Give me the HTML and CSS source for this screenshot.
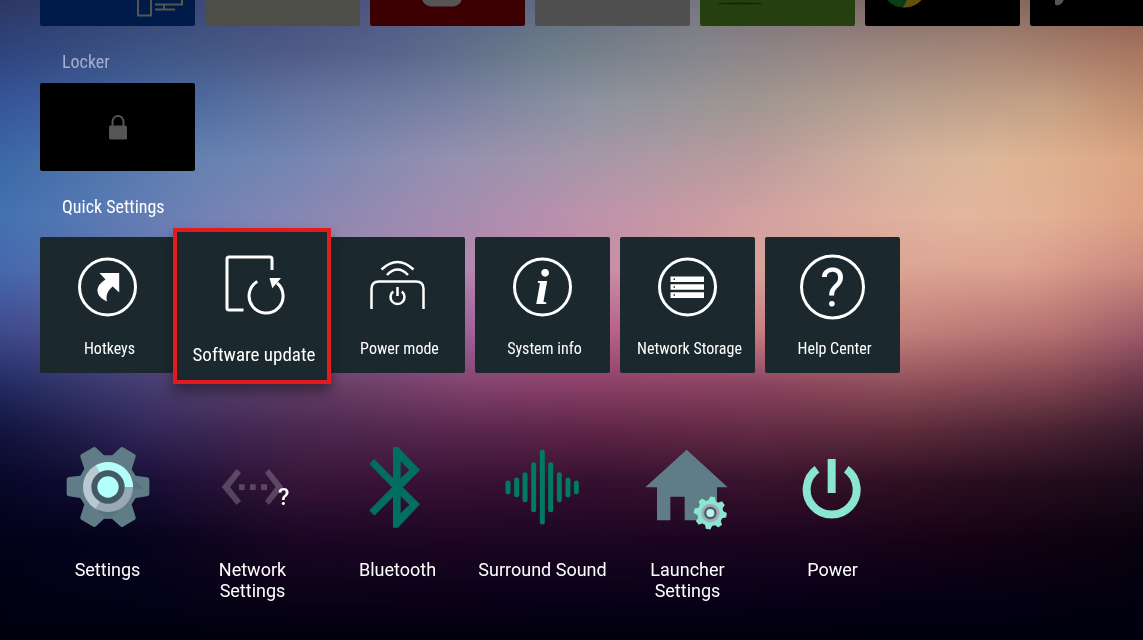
FILE: index.html
```
<!DOCTYPE html>
<html lang="en">
<head>
  <meta charset="UTF-8" />
  <meta name="viewport" content="width=device-width, initial-scale=1.0" />
  <title>Launcher</title>
  <link rel="stylesheet" href="styles.css">
</head>
<body>
  <div class="wallpaper">
    <div class="band band-1"></div>
    <div class="band band-2"></div>
    <div class="band band-3"></div>
    <div class="band band-4"></div>
    <div class="band band-5"></div>
    <div class="band band-6"></div>
    <div class="band band-7"></div>
    <div class="band band-8"></div>
    <div class="band band-9"></div>
    <div class="band band-10"></div>
    <div class="band band-11"></div>
    <div class="band band-12"></div>
    <div class="band band-13"></div>
  </div>

  <main class="launcher">
    <!-- Apps row, scrolled almost out of view -->
    <div class="apps">
      <button class="app app-blue" aria-label="Remote desktop">
        <svg viewBox="0 0 155 25" fill="none" stroke="#55564f" stroke-width="2">
          <path d="M98 -4V15H111V-4M115 4H142V-2M124 4V9M115 9H135" />
        </svg>
      </button>
      <button class="app app-olive" aria-label="App"></button>
      <button class="app app-red" aria-label="Video">
        <svg viewBox="0 0 155 25"><rect x="52" y="-20" width="40" height="26" rx="9" fill="#555" /></svg>
      </button>
      <button class="app app-grey" aria-label="App"></button>
      <button class="app app-green" aria-label="App">
        <svg viewBox="0 0 155 25"><ellipse cx="40" cy="3" rx="23" ry="1" fill="#142803" /></svg>
      </button>
      <button class="app app-black" aria-label="Browser">
        <svg viewBox="0 0 155 25">
          <path d="M39 7A22 22 0 0 1 20 -4H45Z" fill="#0d3d17" />
          <path d="M38 7A22 22 0 0 0 59 -4H44Z" fill="#66500a" />
        </svg>
      </button>
      <button class="app app-black" aria-label="App">
        <svg viewBox="0 0 155 25"><path d="M25 -2H34Q33 4 27 5L25 4Z" fill="#555" /></svg>
      </button>
    </div>

    <h2 class="row-title row-title-dim">Locker</h2>
    <button class="locker" aria-label="Locker">
      <svg viewBox="0 0 20 26">
        <path d="M4.500 12V7.500A5.500 5.500 0 0 1 15.500 7.500V12" fill="none" stroke="#555" stroke-width="2" />
        <rect x="1" y="11.500" width="18" height="14" rx="1.500" fill="#555" />
      </svg>
    </button>

    <h2 class="row-title">Quick Settings</h2>
    <div class="tiles">
      <button class="tile">
        <svg viewBox="0 0 68 68">
          <circle class="line" cx="33.500" cy="34" r="28" />
          <path d="M25.500 20H45.200V39.500L38.700 33.500C34 37.500 31.500 42 33 48.500C25 45 22.500 40 23.800 35C25 31 28 29 31.500 26.500Z" />
        </svg>
        <span>Hotkeys</span>
      </button>
      <button class="tile tile-selected">
        <svg viewBox="0 0 68 68">
          <path class="line" d="M25.500 59H11Q9 59 9 57V8Q9 6 11 6H52Q54 6 54 8V19" />
          <path class="line" d="M39.300 30.500A17 17 0 1 0 59 32" />
          <path d="M51.500 27H63L54.300 37.300Z" />
        </svg>
        <span>Software update</span>
      </button>
      <button class="tile">
        <svg viewBox="0 0 68 68">
          <path class="line line-thin" d="M7.500 56V36Q7.500 28.500 15 28.500H52Q59.500 28.500 59.500 36V56" />
          <path class="line line-thin" d="M17.500 16.500Q33.500 1.500 49.500 16.500M23 22Q33.500 11 44 22" />
          <path class="line line-thin" d="M29.200 38.500A7 7 0 1 0 37.800 38.500M33.500 34V43" />
        </svg>
        <span>Power mode</span>
      </button>
      <button class="tile">
        <svg viewBox="0 0 68 68">
          <circle class="line" cx="33.500" cy="34" r="28" />
          <text class="glyph-info" x="33" y="51">i</text>
        </svg>
        <span>System info</span>
      </button>
      <button class="tile">
        <svg viewBox="0 0 68 68">
          <circle class="line" cx="33.500" cy="34" r="28" />
          <path d="M16.500 23.500H50V29H16.500ZM16.500 31.300H50V36.800H16.500ZM16.500 39.300H50V45H16.500Z" />
          <path d="M19.500 25.500H21V27H19.500ZM19.500 33.300H21V34.800H19.500ZM19.500 41.300H21V42.800H19.500Z" fill="#1c2a2e" />
        </svg>
        <span>Network Storage</span>
      </button>
      <button class="tile">
        <svg viewBox="0 0 68 68">
          <circle class="line" cx="33.500" cy="34" r="31" />
          <text class="glyph-help" x="33.500" y="53">?</text>
        </svg>
        <span>Help Center</span>
      </button>
    </div>

    <div class="shortcuts">
      <button class="shortcut">
        <svg viewBox="39 36 270 270">
          <path fill="#607d87" d="M57 141L91 137L103 117L91 80Q90 75 94 73L130 52Q134 50 138 53L162 76H187L211 53Q215 50 219 52L254 73Q258 75 257 80L245 118L257 137L291 142Q298 143 298 150V192Q298 198 291 199L257 204L245 223L257 262Q258 267 254 269L219 290Q215 293 211 289L186 266H162L138 289Q134 293 130 290L94 269Q90 267 91 262L103 223L91 204L57 199Q50 198 50 192V149Q50 142 57 141Z" />
          <path fill="#4f6b75" opacity=".5" d="M239 135L280 176L245 178ZM140 238L165 262H187L205 245Z" />
          <circle cx="174" cy="171" r="75" fill="#98a9b4" />
          <path fill="#b9c8d1" d="M174 171L137 106A75 75 0 0 0 137 236Z" />
          <path fill="#b4fdfa" d="M174 171L137 106A75 75 0 0 1 249 171Z" />
          <circle cx="174" cy="171" r="50" fill="#435a62" />
          <circle cx="174" cy="171" r="32" fill="#b2fffb" />
        </svg>
        <span>Settings</span>
      </button>
      <button class="shortcut">
        <svg viewBox="474 36 270 270">
          <path fill="#fff" opacity=".22" d="M560 117L573 129L540 171L573 213L560 225L515 171ZM657 117L700 171L657 225L645 213L677 171L645 129ZM567 163H584V180H567ZM600 163H617V180H600ZM633 163H651V180H633Z" />
          <text class="glyph-unknown" x="701" y="226">?</text>
        </svg>
        <span>Network<br>Settings</span>
      </button>
      <button class="shortcut">
        <svg viewBox="40 36 270 270">
          <path fill="#006f61" fill-rule="evenodd" d="M160 51H175L241 120L190 172L241 223L175 293H160V201L104 257L89 241L157 172L89 102L104 87L160 144ZM183 94V145L209 120ZM183 199V249L209 224Z" />
        </svg>
        <span>Bluetooth</span>
      </button>
      <button class="shortcut">
        <svg viewBox="474 36 270 270">
          <path fill="none" stroke="#007a61" stroke-width="15" stroke-linecap="round" d="M504 159V185M530 150V194M555 134V209M581 104V239M607 67V276M632 104V239M658 134V209M684 150V194M709 159V185" />
        </svg>
        <span>Surround Sound</span>
      </button>
      <button class="shortcut">
        <svg viewBox="39 36 270 270">
          <path fill="#607d87" d="M170 59L293 172H261V271H164V200H121V271H81V172H46Z" />
          <g transform="rotate(8 241 249)" fill="#8ae6d0">
            <circle cx="241" cy="249" r="39" />
            <path id="cog" d="M230 212L234 200H248L252 212V286L248 298H234L230 286Z" />
            <use href="#cog" transform="rotate(45 241 249)" />
            <use href="#cog" transform="rotate(90 241 249)" />
            <use href="#cog" transform="rotate(135 241 249)" />
          </g>
          <circle cx="241" cy="249" r="28" fill="#a5adbd" />
          <circle cx="241" cy="249" r="21" fill="#8695a2" />
          <circle cx="241" cy="249" r="18" fill="#435a62" />
          <circle cx="241" cy="249" r="12" fill="#b8f5e3" />
        </svg>
        <span>Launcher<br>Settings</span>
      </button>
      <button class="shortcut">
        <svg viewBox="474 36 270 270">
          <path fill="none" stroke="#8ae6d1" stroke-width="24" d="M561 118A75 75 0 1 0 649 118M605 87V189" />
        </svg>
        <span>Power</span>
      </button>
    </div>
  </main>
</body>
</html>
```
FILE: styles.css
```
* {
  box-sizing: border-box;
}
body {
  margin: 0;
  min-height: 100vh;
  overflow: hidden;
  background: #000010;
  color: #fff;
  font-family: Roboto, "Liberation Sans", sans-serif;
}
button {
  padding: 0;
  border: 0;
  background: none;
  color: inherit;
  font: inherit;
  cursor: pointer;
}
svg {
  display: block;
}

/* Wallpaper: each band fades in over the one above it */
.wallpaper {
  position: fixed;
  inset: 0;
  z-index: -1;
}
.band {
  position: absolute;
  inset: 0;
  mask-image: linear-gradient(transparent var(--from), #000 var(--to));
}
.band-1 {
  mask-image: none;
  background: linear-gradient(90deg, #2e3763, #3b4775 17%, #4c5580 32%, #5c6880 46%, #75767e 61%, #7c6a6b 75%, #85695f 89%, #80584c);
}
.band-2 {
  --from: 0%;
  --to: 8%;
  background: linear-gradient(90deg, #2f447d, #3d5585 13%, #505b86 26%, #59658c 35%, #6d7d8a 48%, #85858c 61%, #9a8681 74%, #a68676 87%, #a87560);
}
.band-3 {
  --from: 8%;
  --to: 16%;
  background: linear-gradient(90deg, #36559a, #4d6b9f 17%, #6474a0 26%, #7880a2 39%, #8d93a0 52%, #a09691 66%, #b8a08f 79%, #c5a184 92%, #c18d70);
}
.band-4 {
  --from: 16%;
  --to: 25%;
  background: linear-gradient(90deg, #3b68a6, #6482b1 17%, #7585b2 26%, #9590b0 39%, #a897a8 52%, #bb9c9c 66%, #d4b29d 79%, #deb899 87%, #deac8a 96%, #dba583);
}
.band-5 {
  --from: 25%;
  --to: 34%;
  background: linear-gradient(90deg, #4272b0, #5a7ab3 9%, #7d85b4 22%, #9a8bb0 35%, #b88fae 48%, #cb9aa3 61%, #dcab9f 74%, #e3b69e 84%, #e2b095 92%, #db9f83);
}
.band-6 {
  --from: 34%;
  --to: 42%;
  background: linear-gradient(90deg, #4568ad, #7078b0 15%, #a088b0 29%, #b488b0 41%, #cb8fa5 54%, #d9a29b 66%, #dba593 79%, #dca390 89%, #cb897e);
}
.band-7 {
  --from: 42%;
  --to: 52%;
  background: linear-gradient(90deg, #3e4a8b, #66508c 17%, #8a5a92 29%, #a0609a 41%, #b8608a 54%, #c87c82 66%, #c2807c 79%, #b5706f 92%, #9c5a68);
}
.band-8 {
  --from: 52%;
  --to: 60%;
  background: linear-gradient(90deg, #232c62, #3a3a70 9%, #52406f 17%, #6a4068 30%, #83446f 41%, #8d4068 52%, #8a4460 66%, #90505a 79%, #804550 92%, #683448);
}
.band-9 {
  --from: 60%;
  --to: 67%;
  background: linear-gradient(90deg, #121540, #33285a 13%, #4a2850 26%, #5a2850 39%, #602648 52%, #642c45 66%, #602d3d 79%, #4c2434 92%, #3a1b2c);
}
.band-10 {
  --from: 67%;
  --to: 75%;
  background: linear-gradient(90deg, #08082a, #1a1038 13%, #38163a 26%, #3a1236 39%, #361030 52%, #3a142e 66%, #301022 79%, #1c0b1a);
}
.band-11 {
  --from: 75%;
  --to: 84%;
  background: linear-gradient(90deg, #02021a, #07041e 13%, #1b0724 26%, #1e0624 39%, #1d0622 52%, #1c0520 70%, #170316 83%, #0a020e);
}
.band-12 {
  --from: 84%;
  --to: 94%;
  background: linear-gradient(90deg, #010112, #030216 13%, #0a0216 26%, #080118 60%, #020010);
}
.band-13 {
  --from: 94%;
  --to: 100%;
  background: #00000e;
}

.launcher {
  padding-left: 40px;
}

/* Apps */
.apps {
  display: flex;
  gap: 10px;
}
.app {
  display: flex;
  flex: 0 0 155px;
  height: 26px;
  border-radius: 0 0 2px 2px;
  overflow: hidden;
}
.app-blue {
  background: #001b4a;
}
.app-olive {
  background: #4e4e49;
}
.app-red {
  background: #3d0002;
}
.app-grey {
  background: #505050;
}
.app-green {
  background: #263f0f;
}
.app-black {
  background: #000;
}

.row-title {
  margin: 24px 0 18px 22px;
  font-family: "Roboto Condensed", Roboto, sans-serif;
  font-size: 18px;
  font-weight: 400;
  line-height: 24px;
}
.row-title-dim {
  margin-bottom: 9px;
  color: #a3afcb;
}

.locker {
  display: flex;
  align-items: center;
  justify-content: center;
  width: 155px;
  height: 88px;
  border-radius: 2px;
  background: #000;
}
.locker svg {
  width: 20px;
  height: 26px;
}

/* Quick settings */
.tiles,
.shortcuts {
  display: grid;
  grid-template-columns: repeat(6, 135px);
  gap: 10px;
}
.tile {
  display: flex;
  flex-direction: column;
  align-items: center;
  height: 136px;
  padding-top: 16px;
  border-radius: 2px;
  background: #1b292e;
  font-family: "Roboto Condensed", Roboto, sans-serif;
  font-size: 16px;
  line-height: 24px;
  white-space: nowrap;
}
.tile svg {
  width: 68px;
  height: 68px;
  fill: #fff;
}
.tile span {
  margin-top: 16px;
  padding-left: 4px;
}
.tile-selected {
  z-index: 1;
  height: 156px;
  margin: -9px -11px -11px -12px;
  padding-top: 19px;
  border: 4px solid #e31b1e;
  border-radius: 0;
  box-shadow: 0 8px 12px rgba(0, 0, 0, 0.4);
  font-size: 19px;
}
.tile-selected span {
  margin-top: 24px;
}
.line {
  fill: none;
  stroke: #fff;
  stroke-width: 3;
}
.line-thin {
  stroke-width: 2.5;
}
.glyph-info,
.glyph-help,
.glyph-unknown {
  fill: #fff;
  text-anchor: middle;
}
.glyph-info {
  font: italic bold 51px "Liberation Serif", serif;
}
.glyph-help {
  font: 400 53px Roboto, sans-serif;
}
.glyph-unknown {
  font: 500 70px Roboto, sans-serif;
}

/* Shortcuts */
.shortcuts {
  margin-top: 69px;
}
.shortcut {
  display: flex;
  flex-direction: column;
  align-items: center;
  font-size: 18px;
  line-height: 21px;
}
.shortcut svg {
  width: 90px;
  height: 90px;
}
.shortcut span {
  margin-top: 27px;
}
```
